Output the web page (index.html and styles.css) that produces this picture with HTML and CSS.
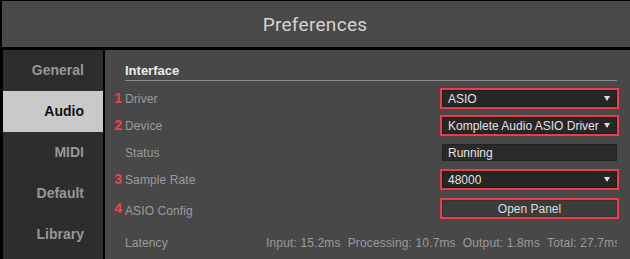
FILE: index.html
```html
<!DOCTYPE html>
<html>
<head>
<meta charset="utf-8">
<link rel="stylesheet" href="styles.css">
</head>
<body>
<div class="window">
  <header class="titlebar">Preferences</header>
  <div class="body">
    <nav class="sidebar">
      <div class="nav-item">General</div>
      <div class="nav-item active">Audio</div>
      <div class="nav-item">MIDI</div>
      <div class="nav-item">Default</div>
      <div class="nav-item">Library</div>
    </nav>
    <main class="panel">
      <div class="section-title">Interface</div>
      <div class="rows">
        <div class="row">
          <span class="num">1</span>
          <span class="label">Driver</span>
          <div class="ctrl marked">
            <div class="field select"><span>ASIO</span><i class="arrow"></i></div>
          </div>
        </div>
        <div class="row">
          <span class="num">2</span>
          <span class="label">Device</span>
          <div class="ctrl marked">
            <div class="field select"><span>Komplete Audio ASIO Driver</span><i class="arrow"></i></div>
          </div>
        </div>
        <div class="row">
          <span class="num"></span>
          <span class="label">Status</span>
          <div class="ctrl">
            <div class="field status"><span>Running</span></div>
          </div>
        </div>
        <div class="row">
          <span class="num">3</span>
          <span class="label">Sample Rate</span>
          <div class="ctrl marked">
            <div class="field select"><span>48000</span><i class="arrow"></i></div>
          </div>
        </div>
        <div class="row row-config">
          <span class="num">4</span>
          <span class="label">ASIO Config</span>
          <div class="ctrl marked">
            <div class="field button">Open Panel</div>
          </div>
        </div>
        <div class="latency">
          <span class="label lat-label">Latency</span>
          <div class="lat-values">
            <span>Input: 15.2ms</span>
            <span>Processing: 10.7ms</span>
            <span>Output: 1.8ms</span>
            <span>Total: 27.7ms</span>
          </div>
        </div>
      </div>
    </main>
  </div>
</div>
</body>
</html>
```

FILE: styles.css
```css
html, body {
  margin: 0;
  padding: 0;
  background: #000;
}

body {
  width: 630px;
  height: 259px;
  overflow: hidden;
  font-family: "Liberation Sans", Arial, sans-serif;
}

.window {
  padding: 1px 0 0 2px;
  height: 258px;
  display: flex;
  flex-direction: column;
}

.titlebar {
  height: 46px;
  background: #4a4a4a;
  color: #d4d4d4;
  font-family: Roboto, "Liberation Sans", sans-serif;
  font-size: 19px;
  letter-spacing: 0.3px;
  display: flex;
  align-items: center;
  justify-content: center;
  padding-right: 2px;
}

.body {
  margin-top: 3px;
  flex: 1;
  display: flex;
  gap: 2px;
  min-width: 0;
}

.sidebar {
  flex: none;
  width: 100px;
  margin-left: 1px;
  background: #2d2d2d;
  display: flex;
  flex-direction: column;
}

.nav-item {
  height: 41px;
  line-height: 41px;
  text-align: right;
  padding-right: 19px;
  font-size: 14px;
  font-weight: bold;
  color: #979797;
}

.nav-item.active {
  background: #c9c9c9;
  color: #111;
}

.panel {
  flex: 1;
  min-width: 0;
  background: #484848;
  padding-right: 11px;
}

.section-title {
  margin: 12px 2px 0 20px;
  line-height: 17px;
  padding-bottom: 1px;
  border-bottom: 1px solid #8a8a8a;
  color: #ececec;
  font-size: 13px;
  font-weight: bold;
}

.rows {
  margin-top: 7px;
  display: flex;
  flex-direction: column;
  gap: 6px;
}

.row {
  display: grid;
  grid-template-columns: 17px 318px 179px;
  height: 21px;
  align-items: center;
}

.row-config {
  margin-top: 2px;
}

.row-config .label {
  padding-top: 5px;
}

.num {
  color: #f0404b;
  font-size: 14px;
  font-weight: bold;
  text-align: right;
  line-height: 21px;
}

.label {
  padding-left: 3px;
  color: #9b9b9b;
  font-size: 12px;
  letter-spacing: 0.1px;
}

.ctrl {
  height: 21px;
  box-sizing: border-box;
  padding: 2px;
}

.ctrl.marked {
  padding: 0;
  border: 2px solid #ee3d49;
}

.field {
  height: 17px;
  box-sizing: border-box;
  background: #262626;
  border: 1px solid #1c1c1c;
  color: #e2e2e2;
  font-size: 12px;
  letter-spacing: 0;
  display: flex;
  align-items: center;
  padding: 0 5px 0 5px;
}

.field.select {
  justify-content: space-between;
}

.field.status {
  background: #2a2a2a;
  border-color: #222;
}

.field.button {
  background: #3c3c3c;
  border-color: #333;
  justify-content: center;
  color: #dcdcdc;
}

.arrow {
  width: 0;
  height: 0;
  border-left: 3.5px solid transparent;
  border-right: 3.5px solid transparent;
  border-top: 5px solid #e0e0e0;
  margin-right: 1px;
  flex: none;
}

.latency {
  margin-top: 7px;
  height: 21px;
  display: flex;
  align-items: center;
  padding-left: 17px;
  margin-right: 2px;
  min-width: 0;
}

.lat-label {
  width: 144px;
  box-sizing: border-box;
  flex: none;
}

.lat-values {
  flex: 1;
  min-width: 0;
  overflow: hidden;
  white-space: nowrap;
  display: flex;
  gap: 7px;
  color: #9b9b9b;
  font-size: 12px;
  letter-spacing: 0.15px;
}

.lat-values span {
  flex: none;
}
```
